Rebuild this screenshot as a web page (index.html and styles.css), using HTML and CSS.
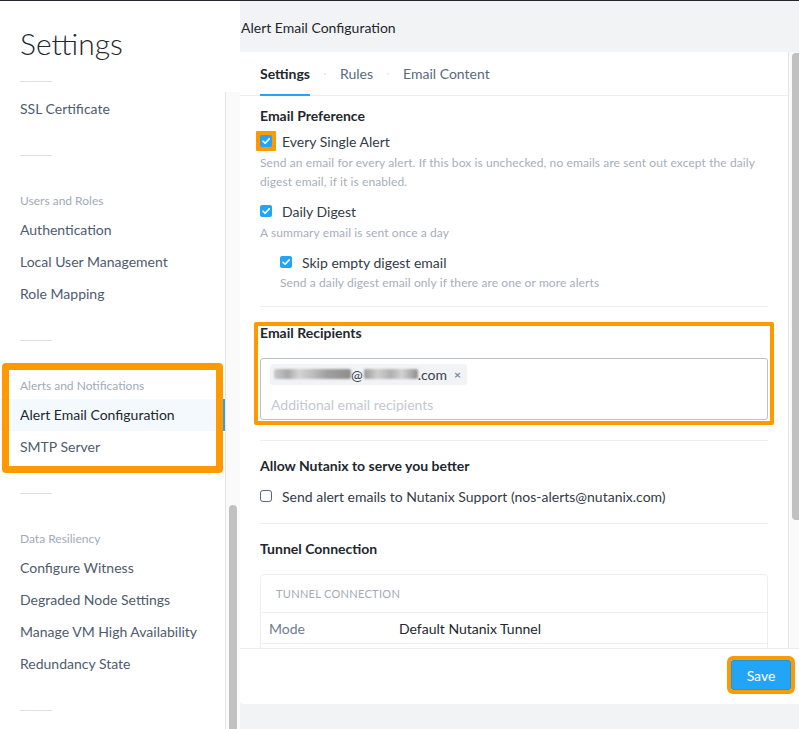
FILE: index.html
```html
<!DOCTYPE html>
<html lang="en">
<head>
<meta charset="utf-8">
<title>Alert Email Configuration</title>
<link rel="stylesheet" href="styles.css">
</head>
<body>
<div class="app">
  <aside class="sidebar">
    <div class="side-head">
      <h1 class="side-title">Settings</h1>
      <hr class="side-rule">
    </div>
    <div class="side-body">
      <nav class="side-nav">
        <div class="grp grp-first">
          <a class="item">SSL Certificate</a>
        </div>
        <hr class="side-rule">
        <div class="grp">
          <div class="grp-label">Users and Roles</div>
          <a class="item">Authentication</a>
          <a class="item">Local User Management</a>
          <a class="item">Role Mapping</a>
        </div>
        <hr class="side-rule">
        <div class="grp">
          <div class="grp-inner">
            <span class="annot annot-side"></span>
            <div class="grp-label">Alerts and Notifications</div>
            <a class="item active">Alert Email Configuration</a>
            <a class="item">SMTP Server</a>
          </div>
        </div>
        <hr class="side-rule">
        <div class="grp">
          <div class="grp-label">Data Resiliency</div>
          <a class="item">Configure Witness</a>
          <a class="item">Degraded Node Settings</a>
          <a class="item">Manage VM High Availability</a>
          <a class="item">Redundancy State</a>
        </div>
        <hr class="side-rule">
      </nav>
      <div class="side-scroll"><span class="side-thumb"></span></div>
    </div>
  </aside>

  <main class="main">
    <header class="main-head">
      <span class="main-title">Alert Email Configuration</span>
      <span class="help">?</span>
    </header>
    <section class="card">
      <div class="card-body">
        <div class="card-content">
          <div class="tabs">
            <a class="tab active">Settings</a>
            <span class="tab-sep"></span>
            <a class="tab">Rules</a>
            <span class="tab-sep"></span>
            <a class="tab">Email Content</a>
          </div>
          <div class="form">
            <div class="sec sec-pref">
              <div class="sec-title">Email Preference</div>
              <label class="check-row">
                <span class="cb checked marked"><svg viewBox="0 0 12 12"><path d="M3 6.2 5.1 8.3 9.2 3.9"/></svg></span>
                <span class="check-label">Every Single Alert</span>
              </label>
              <p class="help-text">Send an email for every alert. If this box is unchecked, no emails are sent out except the daily digest email, if it is enabled.</p>
              <label class="check-row spaced">
                <span class="cb checked"><svg viewBox="0 0 12 12"><path d="M3 6.2 5.1 8.3 9.2 3.9"/></svg></span>
                <span class="check-label">Daily Digest</span>
              </label>
              <p class="help-text">A summary email is sent once a day</p>
              <div class="indent">
                <label class="check-row spaced">
                  <span class="cb checked"><svg viewBox="0 0 12 12"><path d="M3 6.2 5.1 8.3 9.2 3.9"/></svg></span>
                  <span class="check-label">Skip empty digest email</span>
                </label>
                <p class="help-text tight">Send a daily digest email only if there are one or more alerts</p>
              </div>
            </div>

            <div class="sec sec-recip">
              <div class="recip-wrap">
                <span class="annot annot-recip"></span>
                <div class="sec-title">Email Recipients</div>
                <div class="recip-input">
                  <span class="chip">
                    <span class="smudge s1"></span><span class="chip-txt">@</span><span class="smudge s2"></span><span class="chip-txt">.com</span><span class="chip-x">×</span>
                  </span>
                  <div class="placeholder">Additional email recipients</div>
                </div>
              </div>
            </div>

            <div class="sec sec-allow">
              <div class="sec-title">Allow Nutanix to serve you better</div>
              <label class="check-row spaced">
                <span class="cb"></span>
                <span class="check-label">Send alert emails to Nutanix Support (nos-alerts@nutanix.com)</span>
              </label>
            </div>

            <div class="sec sec-tunnel">
              <div class="sec-title">Tunnel Connection</div>
              <div class="tbl">
                <div class="tbl-head">Tunnel Connection</div>
                <div class="tbl-row">
                  <span class="tbl-key">Mode</span>
                  <span class="tbl-val">Default Nutanix Tunnel</span>
                </div>
                <div class="tbl-row tbl-row-empty"></div>
              </div>
            </div>
          </div>
        </div>
        <div class="card-scroll"><span class="card-thumb"></span></div>
      </div>
      <footer class="card-foot">
        <button class="btn-save">Save</button>
      </footer>
    </section>
  </main>
</div>
</body>
</html>
```

FILE: styles.css
```css
* { box-sizing: border-box; }
html, body { margin: 0; padding: 0; }
body {
  width: 799px;
  height: 729px;
  overflow: hidden;
  font-family: Lato, "Open Sans", "Liberation Sans", sans-serif;
  color: #22272e;
  background: #f2f3f5;
}
a { text-decoration: none; color: inherit; }

.app {
  display: grid;
  grid-template-columns: 240px 559px;
  height: 729px;
  border-top: 1px solid #22262c;
}

/* ---------- sidebar ---------- */
.sidebar {
  background: #fff;
  display: flex;
  flex-direction: column;
  min-height: 0;
}
.side-head {
  height: 91px;
  padding: 24px 0 0 20px;
}
.side-title {
  margin: 0;
  font-size: 30px;
  line-height: 36px;
  font-weight: 300;
  color: #22272e;
}
.side-rule {
  width: 32px;
  height: 1px;
  margin: 0 0 0 20px;
  border: 0;
  background: #dde1e6;
}
.side-head .side-rule { margin: 20px 0 0 0; }

.side-body {
  flex: 1;
  display: flex;
  min-height: 0;
}
.side-nav {
  width: 225px;
  overflow: hidden;
}
.side-scroll {
  width: 15px;
  border-left: 1px solid #e4e4e4;
  background: #fafafa;
  position: relative;
}
.side-thumb {
  position: absolute;
  left: 3px;
  top: 413px;
  width: 8px;
  height: 260px;
  border-radius: 4px;
  background: #c1c1c1;
}

.grp { padding: 37px 0 30px; }
.grp-first { padding-top: 1px; }
.grp-inner { position: relative; }
.grp-label {
  padding-left: 20px;
  font-size: 12px;
  line-height: 16px;
  color: #a1abb9;
  margin-bottom: 5px;
}
.item {
  display: block;
  height: 32px;
  line-height: 32px;
  padding-left: 20px;
  font-size: 14px;
  color: #4e5b6e;
}
.item.active {
  background: #f3f9fd;
  color: #22272e;
  box-shadow: inset -2px 0 0 #22a5f7;
}

/* annotation boxes */
.annot {
  position: absolute;
  border-style: solid;
  border-color: #ff9900;
  pointer-events: none;
  z-index: 2;
}
.annot-side {
  top: -15px;
  bottom: -10px;
  left: 2px;
  right: 2px;
  border-width: 7px;
  border-radius: 4px;
}
.annot-recip {
  top: -1px;
  bottom: -5px;
  left: -6px;
  right: -6px;
  border-width: 4px;
  border-radius: 2px;
}

/* ---------- main ---------- */
.main {
  display: flex;
  flex-direction: column;
  min-width: 0;
}
.main-head {
  height: 51px;
  display: flex;
  align-items: center;
  justify-content: space-between;
  padding-top: 1px;
}
.main-title {
  font-size: 14px;
  color: #22272e;
  margin-left: 1px;
}
.help {
  font-size: 16px;
  font-weight: 700;
  color: #5a677a;
  margin-right: -8px;
  margin-top: 5px;
}

.card {
  background: #fff;
  border-radius: 0 0 0 4px;
  display: flex;
  flex-direction: column;
}
.card-body {
  height: 596px;
  display: flex;
  overflow: hidden;
}
.card-content {
  width: 548px;
  overflow: hidden;
}
.card-scroll {
  width: 11px;
  border-left: 1px solid #e6e6e6;
  background: #fafafa;
  position: relative;
}
.card-thumb {
  position: absolute;
  left: 3px;
  top: 1px;
  width: 10px;
  height: 467px;
  border-radius: 4px;
  background: #c1c1c1;
}

.tabs {
  height: 44px;
  display: flex;
  align-items: center;
  padding-left: 20px;
  border-bottom: 1px solid #eceef1;
}
.tab {
  height: 44px;
  display: flex;
  align-items: center;
  padding-top: 1px;
  font-size: 14px;
  color: #5a6a7e;
  border-bottom: 2px solid transparent;
  margin-bottom: -1px;
}
.tab.active {
  color: #22272e;
  font-weight: 700;
  border-bottom-color: #22a5f7;
}
.tab-sep {
  width: 2px;
  height: 2px;
  border-radius: 1px;
  background: #e3e6ea;
  margin: 0 14px;
}

.form { padding: 0 20px; }
.sec { border-bottom: 1px solid #eceef1; }
.sec-pref { padding: 10px 0 14px; }
.sec-recip { padding: 16px 0 20px; }
.sec-allow { padding: 15px 0 17px; }
.sec-tunnel { padding: 15px 0 20px; border-bottom: 0; }

.sec-title {
  font-size: 14px;
  line-height: 20px;
  font-weight: 700;
  color: #22272e;
}
.check-row {
  display: flex;
  align-items: center;
  height: 20px;
  margin-top: 5px;
}
.check-row.spaced { margin-top: 10px; }
.cb {
  position: relative;
  width: 12px;
  height: 12px;
  border-radius: 3px;
  border: 1.5px solid #56657a;
  flex: none;
  margin-right: 10px;
}
.cb svg { display: none; }
.cb.checked {
  border: 0;
  border-radius: 2px;
  background: #22a5f7;
}
.cb.checked svg {
  display: block;
  width: 12px;
  height: 12px;
  position: relative;
  z-index: 1;
  fill: none;
  stroke: #fff;
  stroke-width: 1.6;
  stroke-linecap: round;
  stroke-linejoin: round;
}
.cb.marked::before {
  content: "";
  position: absolute;
  inset: -4px;
  background: #ff9900;
  border-radius: 1px;
}
.cb.marked::after {
  content: "";
  position: absolute;
  inset: 0;
  background: #22a5f7;
  border-radius: 2px;
}
.check-label {
  font-size: 14px;
  color: #333b47;
}
.help-text {
  margin: 2px 0 0;
  font-size: 12px;
  letter-spacing: 0.1px;
  line-height: 19px;
  color: #a6aebc;
}
.help-text.tight { margin-top: 1px; }
.indent { padding-left: 20px; }

.recip-wrap { position: relative; }
.recip-input {
  margin-top: 15px;
  height: 62px;
  border: 1px solid #b9c0cc;
  border-radius: 3px;
  padding: 4px 9px 0;
}
.chip {
  display: inline-flex;
  align-items: center;
  height: 21px;
  padding: 0 6px 0 4px;
  background: #f2f3f5;
  border-radius: 3px;
  font-size: 14px;
  color: #3a424e;
}
.smudge {
  display: inline-block;
  height: 10px;
  border-radius: 2px;
  filter: blur(1.2px);
}
.s1 {
  width: 77px;
  background: linear-gradient(90deg, #c9c9c9 0%, #a8a8a8 18%, #d4d4d4 32%, #bdbdbd 50%, #9e9e9e 70%, #8e8e8e 100%);
}
.s2 {
  width: 54px;
  margin-left: 1px;
  background: linear-gradient(90deg, #9a9a9a 0%, #cfcfcf 25%, #b0b0b0 50%, #d2d2d2 70%, #8f8f8f 100%);
}
.chip-txt { line-height: 21px; }
.chip-x {
  margin-left: 7px;
  font-size: 12px;
  font-weight: 700;
  color: #7b8696;
}
.placeholder {
  margin-top: 10px;
  padding-left: 1px;
  font-size: 14px;
  line-height: 20px;
  color: #c3c8d1;
}

.tbl {
  margin-top: 15px;
  border: 1px solid #eceef1;
  border-radius: 4px;
}
.tbl-head {
  height: 38px;
  display: flex;
  align-items: center;
  padding-left: 15px;
  font-size: 11px;
  letter-spacing: 0.3px;
  text-transform: uppercase;
  color: #a1abb9;
  border-bottom: 1px solid #eceef1;
}
.tbl-row {
  height: 31px;
  display: flex;
  align-items: center;
  border-bottom: 1px solid #eceef1;
  font-size: 14px;
}
.tbl-key {
  width: 138px;
  padding-left: 8px;
  color: #6b7c92;
}
.tbl-val { color: #22272e; }

.card-foot {
  height: 56px;
  border-top: 1px solid #eceef1;
  display: flex;
  justify-content: flex-end;
  align-items: flex-start;
  padding: 11px 8px 0 0;
}
.btn-save {
  width: 60px;
  height: 30px;
  border: 1px solid #1e96e2;
  border-radius: 2px;
  background: #22a5f7;
  color: #fff;
  font-family: inherit;
  font-size: 14px;
  outline: 4px solid #ff9900;
  outline-offset: 0;
}
```
